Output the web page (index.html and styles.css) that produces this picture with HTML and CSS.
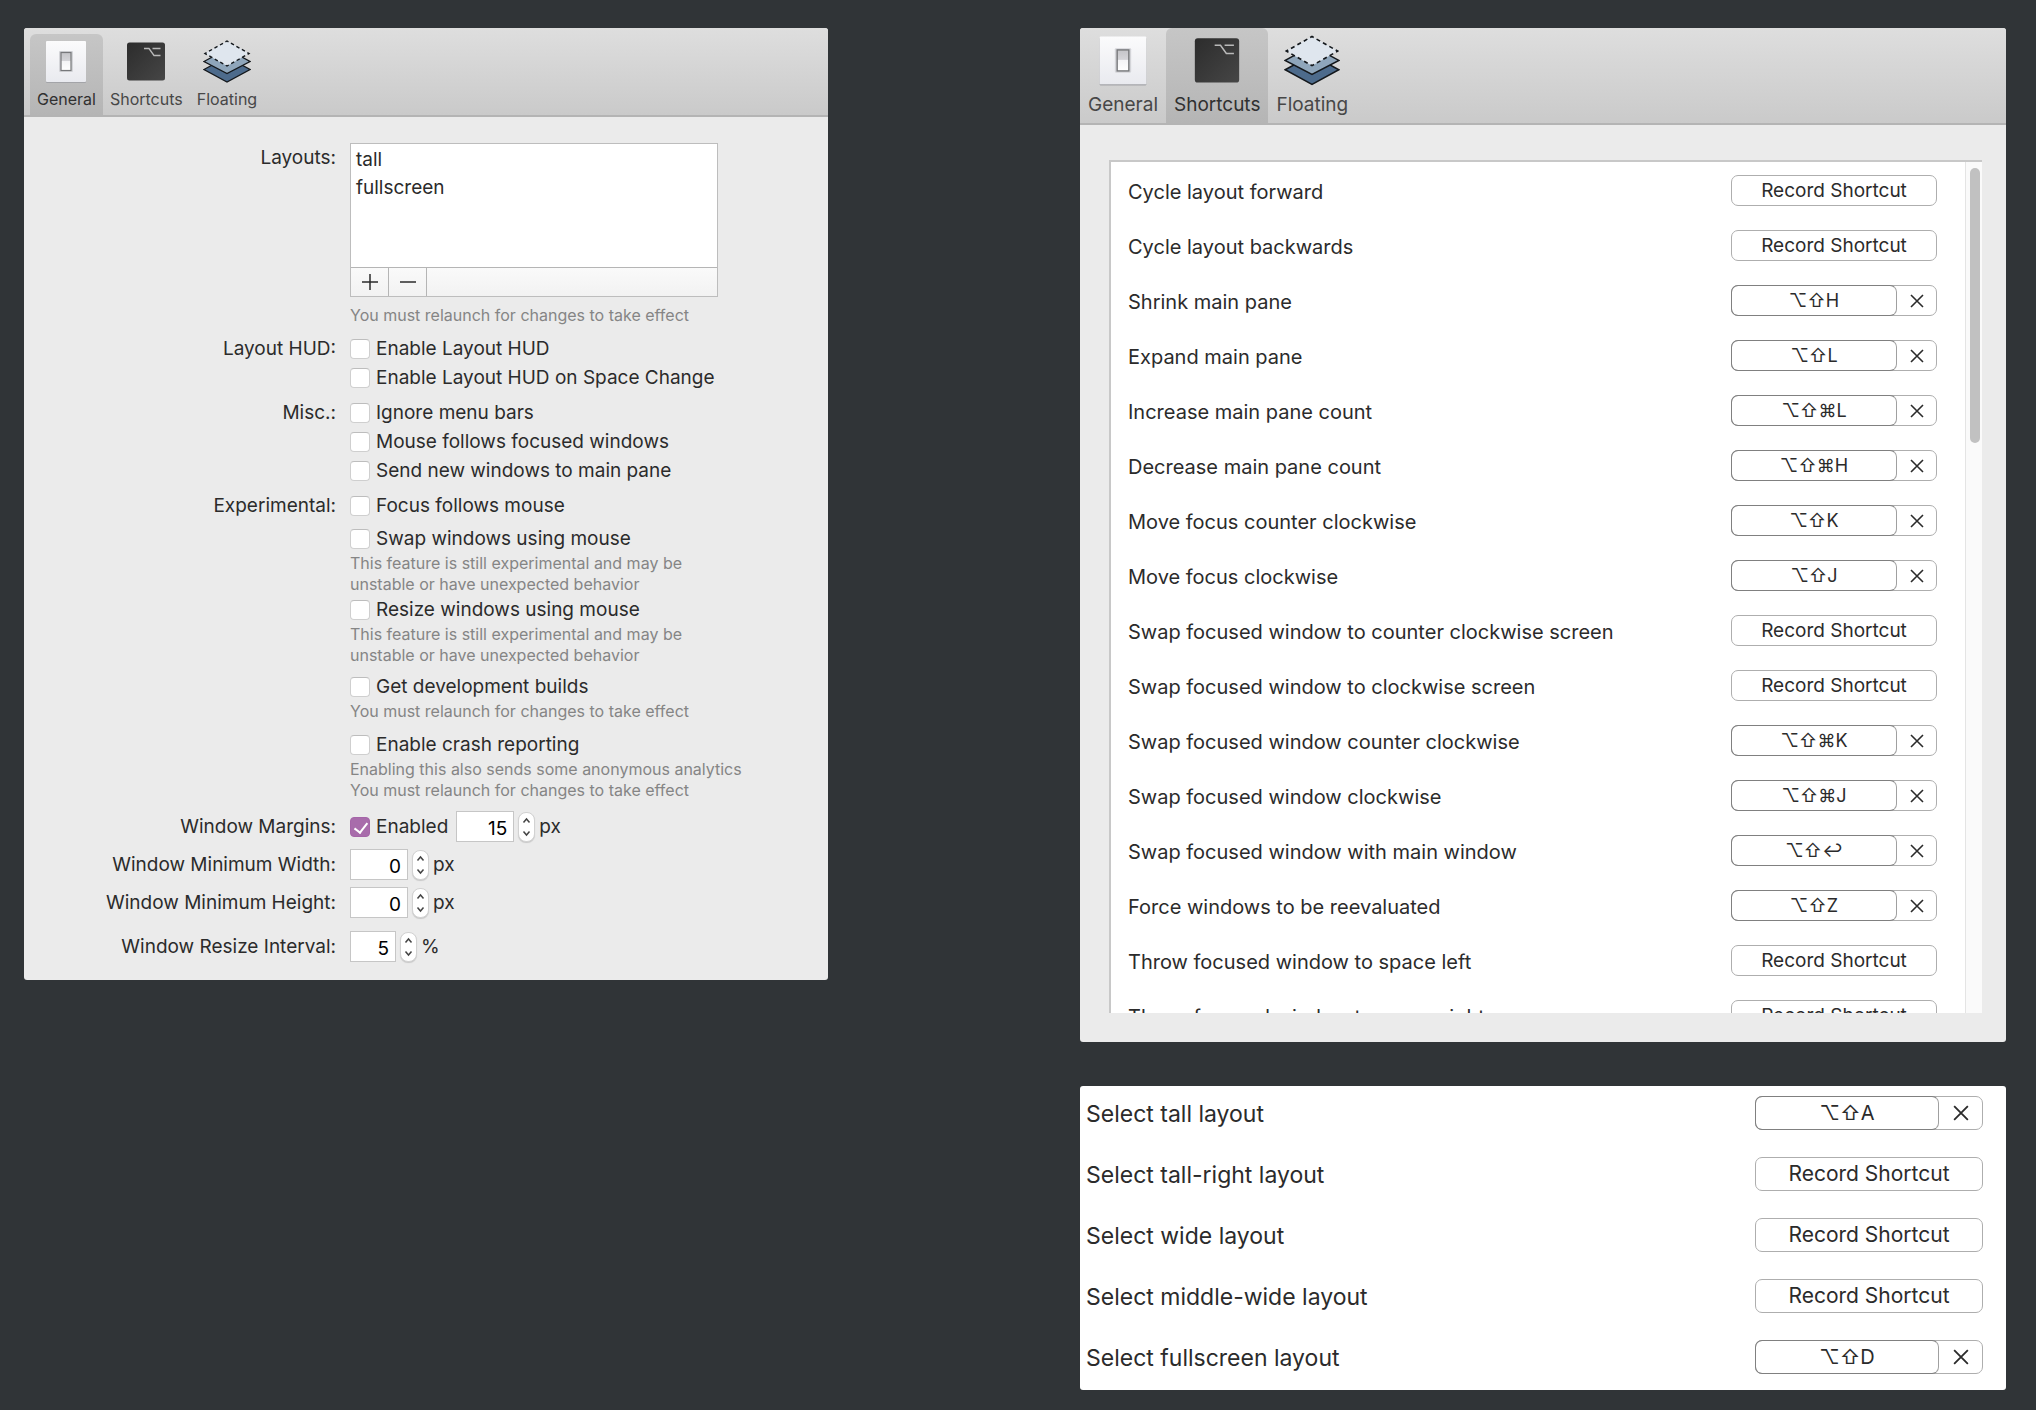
FILE: index.html
```html
<!DOCTYPE html>
<html lang="en">
<head>
    <meta charset="UTF-8">
    <meta name="viewport" content="width=device-width, initial-scale=1.0">
    <title>Preferences</title>
    <link rel="stylesheet" href="styles.css">
</head>
<body>
    <!-- Shared icons -->
    <svg class="sprite" width="0" height="0" aria-hidden="true">
        <defs>
            <linearGradient id="plate" x1="0" y1="0" x2="0" y2="1">
                <stop offset="0" stop-color="#fbfbfc"/>
                <stop offset="1" stop-color="#e9eaef"/>
            </linearGradient>
            <linearGradient id="switch" x1="0" y1="0" x2="0" y2="1">
                <stop offset="0" stop-color="#c4c4c8"/>
                <stop offset="0.45" stop-color="#d4d4d8"/>
                <stop offset="0.5" stop-color="#f4f4f6"/>
                <stop offset="1" stop-color="#ffffff"/>
            </linearGradient>
            <linearGradient id="keycap" x1="0" y1="0" x2="1" y2="1">
                <stop offset="0" stop-color="#2c2c2c"/>
                <stop offset="1" stop-color="#464646"/>
            </linearGradient>
        </defs>
        <symbol id="icon-general" viewBox="0 0 48 48">
            <rect x="4" y="4" width="40" height="41" rx="1" fill="#a3a4a8"/>
            <rect x="4" y="3" width="40" height="41" rx="1" fill="url(#plate)"/>
            <rect x="17" y="13" width="14" height="21" rx="1" fill="#d3d4d8"/>
            <rect x="19" y="14.5" width="10" height="18" fill="url(#switch)" stroke="#77787b" stroke-width="1.2"/>
        </symbol>
        <symbol id="icon-shortcuts" viewBox="0 0 48 48">
            <rect x="5" y="4.5" width="38" height="38" rx="2.5" fill="url(#keycap)"/>
            <path d="M22 10.5h5l5 7h6.500M30.500 10.500h8" fill="none" stroke="#b9b9b9" stroke-width="1.3"/>
        </symbol>
        <symbol id="icon-floating" viewBox="0 0 48 48">
            <path d="M1 31.500 24 19l23 12.500L24 44z" fill="#4d6b8c" stroke="#14181c" stroke-width="1.3"/>
            <path d="M1 23.500 24 11l23 12.500L24 35.500z" fill="#8fa6bb" stroke="#14181c" stroke-width="1.3"/>
            <path d="M2 15.500 24 3l22 12.500L24 28z" fill="#dfe6ee" stroke="#14181c" stroke-width="1.4" stroke-dasharray="3.500 2.800" stroke-dashoffset="1.700"/>
        </symbol>
        <symbol id="icon-clear" viewBox="0 0 14 14">
            <path d="M1 1l12 12M13 1L1 13" fill="none" stroke="#2b2b2b" stroke-width="1.600"/>
        </symbol>
        <symbol id="icon-stepper" viewBox="0 0 8 20">
            <path d="M1 5.500 4 2l3 3.500M1 14.500 4 18l3-3.500" fill="none" stroke="#444" stroke-width="1.500"/>
        </symbol>
    </svg>

    <main class="screens">
        <section class="window general">
            <nav class="toolbar">
                <button type="button" class="tab active"><svg><use href="#icon-general"/></svg>General</button>
                <button type="button" class="tab"><svg><use href="#icon-shortcuts"/></svg>Shortcuts</button>
                <button type="button" class="tab"><svg><use href="#icon-floating"/></svg>Floating</button>
            </nav>
            <form class="settings">
                <div class="setting">
                    <div class="setting-label">Layouts:</div>
                    <div class="setting-body">
                        <div class="list-box">
                            <ul>
                                <li>tall</li>
                                <li>fullscreen</li>
                            </ul>
                            <div class="list-actions">
                                <button type="button" aria-label="Add layout"><svg viewBox="0 0 18 18"><path d="M1 9h16M9 1v16"/></svg></button>
                                <button type="button" aria-label="Remove layout"><svg viewBox="0 0 18 18"><path d="M1 9h16"/></svg></button>
                            </div>
                        </div>
                        <p class="note list-note">You must relaunch for changes to take effect</p>
                    </div>
                </div>

                <div class="setting">
                    <div class="setting-label">Layout HUD:</div>
                    <div class="setting-body">
                        <label class="check"><input type="checkbox">Enable Layout HUD</label>
                        <label class="check"><input type="checkbox">Enable Layout HUD on Space Change</label>
                    </div>
                </div>

                <div class="setting">
                    <div class="setting-label">Misc.:</div>
                    <div class="setting-body">
                        <label class="check"><input type="checkbox">Ignore menu bars</label>
                        <label class="check"><input type="checkbox">Mouse follows focused windows</label>
                        <label class="check"><input type="checkbox">Send new windows to main pane</label>
                    </div>
                </div>

                <div class="setting">
                    <div class="setting-label">Experimental:</div>
                    <div class="setting-body">
                        <label class="check"><input type="checkbox">Focus follows mouse</label>
                        <div class="experimental">
                            <label class="check"><input type="checkbox">Swap windows using mouse</label>
                            <p class="note">This feature is still experimental and may be<br>unstable or have unexpected behavior</p>
                            <label class="check"><input type="checkbox">Resize windows using mouse</label>
                            <p class="note">This feature is still experimental and may be<br>unstable or have unexpected behavior</p>
                        </div>
                        <div class="reporting">
                            <div>
                                <label class="check"><input type="checkbox">Get development builds</label>
                                <p class="note">You must relaunch for changes to take effect</p>
                            </div>
                            <div>
                                <label class="check"><input type="checkbox">Enable crash reporting</label>
                                <p class="note">Enabling this also sends some anonymous analytics<br>You must relaunch for changes to take effect</p>
                            </div>
                        </div>
                    </div>
                </div>

                <div class="numbers">
                    <div class="setting">
                        <label class="setting-label" for="margins">Window Margins:</label>
                        <div class="setting-body number">
                            <label class="check"><input type="checkbox" checked>Enabled</label>
                            <input type="text" id="margins" value="15">
                            <button type="button" class="stepper" aria-label="Change window margins"><svg><use href="#icon-stepper"/></svg></button>
                            <span>px</span>
                        </div>
                    </div>
                    <div class="setting">
                        <label class="setting-label" for="min-width">Window Minimum Width:</label>
                        <div class="setting-body number">
                            <input type="text" id="min-width" value="0">
                            <button type="button" class="stepper" aria-label="Change minimum width"><svg><use href="#icon-stepper"/></svg></button>
                            <span>px</span>
                        </div>
                    </div>
                    <div class="setting">
                        <label class="setting-label" for="min-height">Window Minimum Height:</label>
                        <div class="setting-body number">
                            <input type="text" id="min-height" value="0">
                            <button type="button" class="stepper" aria-label="Change minimum height"><svg><use href="#icon-stepper"/></svg></button>
                            <span>px</span>
                        </div>
                    </div>
                    <div class="setting interval">
                        <label class="setting-label" for="interval">Window Resize Interval:</label>
                        <div class="setting-body number">
                            <input type="text" class="narrow" id="interval" value="5">
                            <button type="button" class="stepper" aria-label="Change resize interval"><svg><use href="#icon-stepper"/></svg></button>
                            <span>%</span>
                        </div>
                    </div>
                </div>
            </form>
        </section>

        <div class="column">
            <section class="window shortcuts">
                <nav class="toolbar">
                    <button type="button" class="tab"><svg><use href="#icon-general"/></svg>General</button>
                    <button type="button" class="tab active"><svg><use href="#icon-shortcuts"/></svg>Shortcuts</button>
                    <button type="button" class="tab"><svg><use href="#icon-floating"/></svg>Floating</button>
                </nav>
                <div class="scroll-box">
                    <ul class="shortcut-list">
                        <li><span>Cycle layout forward</span><button type="button" class="recorder">Record Shortcut</button></li>
                        <li><span>Cycle layout backwards</span><button type="button" class="recorder">Record Shortcut</button></li>
                        <li><span>Shrink main pane</span><div class="recorder"><button type="button" class="keys">⌥⇧H</button><button type="button" class="clear" aria-label="Clear"><svg><use href="#icon-clear"/></svg></button></div></li>
                        <li><span>Expand main pane</span><div class="recorder"><button type="button" class="keys">⌥⇧L</button><button type="button" class="clear" aria-label="Clear"><svg><use href="#icon-clear"/></svg></button></div></li>
                        <li><span>Increase main pane count</span><div class="recorder"><button type="button" class="keys">⌥⇧⌘L</button><button type="button" class="clear" aria-label="Clear"><svg><use href="#icon-clear"/></svg></button></div></li>
                        <li><span>Decrease main pane count</span><div class="recorder"><button type="button" class="keys">⌥⇧⌘H</button><button type="button" class="clear" aria-label="Clear"><svg><use href="#icon-clear"/></svg></button></div></li>
                        <li><span>Move focus counter clockwise</span><div class="recorder"><button type="button" class="keys">⌥⇧K</button><button type="button" class="clear" aria-label="Clear"><svg><use href="#icon-clear"/></svg></button></div></li>
                        <li><span>Move focus clockwise</span><div class="recorder"><button type="button" class="keys">⌥⇧J</button><button type="button" class="clear" aria-label="Clear"><svg><use href="#icon-clear"/></svg></button></div></li>
                        <li><span>Swap focused window to counter clockwise screen</span><button type="button" class="recorder">Record Shortcut</button></li>
                        <li><span>Swap focused window to clockwise screen</span><button type="button" class="recorder">Record Shortcut</button></li>
                        <li><span>Swap focused window counter clockwise</span><div class="recorder"><button type="button" class="keys">⌥⇧⌘K</button><button type="button" class="clear" aria-label="Clear"><svg><use href="#icon-clear"/></svg></button></div></li>
                        <li><span>Swap focused window clockwise</span><div class="recorder"><button type="button" class="keys">⌥⇧⌘J</button><button type="button" class="clear" aria-label="Clear"><svg><use href="#icon-clear"/></svg></button></div></li>
                        <li><span>Swap focused window with main window</span><div class="recorder"><button type="button" class="keys">⌥⇧↩</button><button type="button" class="clear" aria-label="Clear"><svg><use href="#icon-clear"/></svg></button></div></li>
                        <li><span>Force windows to be reevaluated</span><div class="recorder"><button type="button" class="keys">⌥⇧Z</button><button type="button" class="clear" aria-label="Clear"><svg><use href="#icon-clear"/></svg></button></div></li>
                        <li><span>Throw focused window to space left</span><button type="button" class="recorder">Record Shortcut</button></li>
                        <li><span>Throw focused window to space right</span><button type="button" class="recorder">Record Shortcut</button></li>
                    </ul>
                    <div class="scrollbar"><div class="thumb"></div></div>
                </div>
            </section>

            <section class="window layouts">
                <ul class="shortcut-list">
                    <li><span>Select tall layout</span><div class="recorder"><button type="button" class="keys">⌥⇧A</button><button type="button" class="clear" aria-label="Clear"><svg><use href="#icon-clear"/></svg></button></div></li>
                    <li><span>Select tall-right layout</span><button type="button" class="recorder">Record Shortcut</button></li>
                    <li><span>Select wide layout</span><button type="button" class="recorder">Record Shortcut</button></li>
                    <li><span>Select middle-wide layout</span><button type="button" class="recorder">Record Shortcut</button></li>
                    <li><span>Select fullscreen layout</span><div class="recorder"><button type="button" class="keys">⌥⇧D</button><button type="button" class="clear" aria-label="Clear"><svg><use href="#icon-clear"/></svg></button></div></li>
                </ul>
            </section>
        </div>
    </main>
</body>
</html>
```
FILE: styles.css
```css
* {
    box-sizing: border-box;
}

body {
    margin: 0;
    min-height: 100vh;
    background: #303437;
    color: #2b2b2b;
    font-family: Inter, "DejaVu Sans", sans-serif;
    font-size: 19px;
}

ul,
p {
    margin: 0;
    padding: 0;
    list-style: none;
}

button,
input {
    margin: 0;
    padding: 0;
    border: none;
    background: none;
    color: inherit;
    font: inherit;
}

.sprite {
    position: absolute;
}

.screens {
    display: grid;
    grid-template-columns: 804fr 926fr;
    column-gap: 252px;
    align-items: start;
    padding: 28px 30px 20px 24px;
}

.column {
    display: flex;
    flex-direction: column;
    gap: 44px;
}

.window {
    background: #ebebeb;
    border-radius: 3px;
    overflow: hidden;
}

/* Toolbar */
.toolbar {
    display: flex;
    align-items: flex-end;
    height: 89px;
    padding-left: 6px;
    background: linear-gradient(#dedede, #cacaca);
    border-bottom: 2px solid #b4b4b4;
}

.tab {
    display: flex;
    flex-direction: column;
    align-items: center;
    height: 81px;
    padding: 4px 7px 0;
    border-radius: 6px 6px 0 0;
    color: #474747;
    font-size: 16px;
    line-height: 20px;
}

.tab svg {
    width: 48px;
    height: 48px;
    margin-bottom: 3px;
}

.tab.active {
    background: linear-gradient(#c6c6c6, #b5b5b5);
    color: #303030;
}

/* General settings */
.settings {
    padding: 26px 0 18px;
}

.setting {
    display: grid;
    grid-template-columns: 312fr 478fr;
    column-gap: 14px;
    margin-bottom: 6px;
    line-height: 29px;
}

.setting-label {
    text-align: right;
}

.list-box {
    width: 368px;
    border: 1px solid #bdbdbd;
    background: #fff;
}

.list-box ul {
    height: 123px;
    padding: 2px 5px;
    line-height: 28px;
}

.list-actions {
    display: flex;
    height: 29px;
    border-top: 1px solid #b5b5b5;
    background: linear-gradient(#fafafa, #f2f2f2);
}

.list-actions button {
    display: flex;
    align-items: center;
    justify-content: center;
    width: 38px;
    border-right: 1px solid #b5b5b5;
}

.list-actions svg {
    width: 18px;
    height: 18px;
    stroke: #2b2b2b;
    stroke-width: 1.5;
}

.note {
    color: #858585;
    font-size: 16px;
    line-height: 21px;
}

.list-note {
    margin: 8px 0;
}

.setting:first-child {
    margin-bottom: 0;
}

.check {
    display: flex;
    align-items: center;
    gap: 6px;
}

.check input {
    appearance: none;
    width: 20px;
    height: 20px;
    border: 1px solid #cfcfcf;
    border-top-color: #bdbdbd;
    border-radius: 4px;
    background: #fff;
}

.check input:checked {
    border-color: #a565a8;
    background: #a86cab;
    position: relative;
}

.check input:checked::after {
    content: "";
    position: absolute;
    left: 6px;
    top: 2px;
    width: 6px;
    height: 11px;
    border: solid #fff;
    border-width: 0 2px 2px 0;
    transform: rotate(38deg);
}

.experimental {
    margin-top: 4px;
}

.reporting {
    display: flex;
    flex-direction: column;
    gap: 8px;
    margin-top: 6px;
}

.numbers {
    margin-top: 10px;
}

.numbers .setting {
    margin-bottom: 7px;
    line-height: 31px;
}

.numbers .interval {
    margin: 13px 0 0;
}

.number {
    display: flex;
    align-items: center;
    height: 31px;
}

.number .check {
    margin-right: 8px;
}

.number > input {
    width: 58px;
    height: 31px;
    padding: 3px 6px 0 0;
    border: 1px solid #c6c6c6;
    background: #fff;
    color: #000;
    text-align: right;
}

.number > input.narrow {
    width: 46px;
}

.stepper {
    display: flex;
    align-items: center;
    justify-content: center;
    width: 17px;
    height: 30px;
    margin: 0 4px;
    border: 1px solid #d2d2d2;
    border-radius: 8px;
    background: #fff;
    box-shadow: 0 1px 1px rgba(0, 0, 0, 0.15);
}

.stepper svg {
    width: 9px;
    height: 20px;
}

/* Shortcuts */
.shortcuts .toolbar {
    height: 97px;
    padding-left: 0;
}

.shortcuts .tab {
    height: 95px;
    padding: 5px 8px 0;
    font-size: 19px;
    line-height: 24px;
}

.shortcuts .tab svg {
    width: 56px;
    height: 56px;
    margin-bottom: 4px;
}

.scroll-box {
    display: flex;
    height: 853px;
    margin: 35px 24px 29px 29px;
    border-top: 2px solid #c8c8c8;
    border-left: 2px solid #c8c8c8;
    background: #fff;
    overflow: hidden;
}

.shortcut-list {
    flex: 1;
}

.shortcut-list li {
    display: flex;
    align-items: center;
    justify-content: space-between;
    height: 55px;
}

.shortcut-list span {
    padding-top: 3px;
}

.shortcuts .shortcut-list {
    padding: 1px 28px 0 17px;
    font-size: 20px;
}

.recorder {
    display: flex;
    align-items: center;
    justify-content: center;
    width: 206px;
    height: 31px;
    border: 1px solid #aeaeae;
    border-radius: 7px;
    background: #fff;
    font-size: 19px;
}

.keys {
    flex: 1;
    align-self: stretch;
    margin: -1px 0 -1px -1px;
    border: 1px solid #808080;
    border-right-color: #a0a0a0;
    border-radius: 7px;
    font-size: 18px;
}

.clear {
    display: flex;
    align-items: center;
    justify-content: center;
    width: 39px;
}

.clear svg {
    width: 14px;
    height: 14px;
}

.scrollbar {
    width: 17px;
    padding: 6px 2px 0 4px;
    border-left: 1px solid #e4e4e4;
    background: #fafafa;
}

.thumb {
    height: 275px;
    border-radius: 5px;
    background: #c1c1c1;
}

/* Layout shortcuts */
.layouts {
    padding: 1px 23px 8px 6px;
    background: #fff;
    font-size: 23px;
}

.layouts .shortcut-list {
    display: flex;
    flex-direction: column;
    gap: 10px;
}

.layouts .shortcut-list li {
    height: 51px;
}

.layouts .recorder {
    width: 228px;
    height: 34px;
    font-size: 21px;
}

.layouts .keys {
    font-size: 20px;
}

.layouts .clear {
    width: 43px;
}

.layouts .clear svg {
    width: 16px;
    height: 16px;
}
```
